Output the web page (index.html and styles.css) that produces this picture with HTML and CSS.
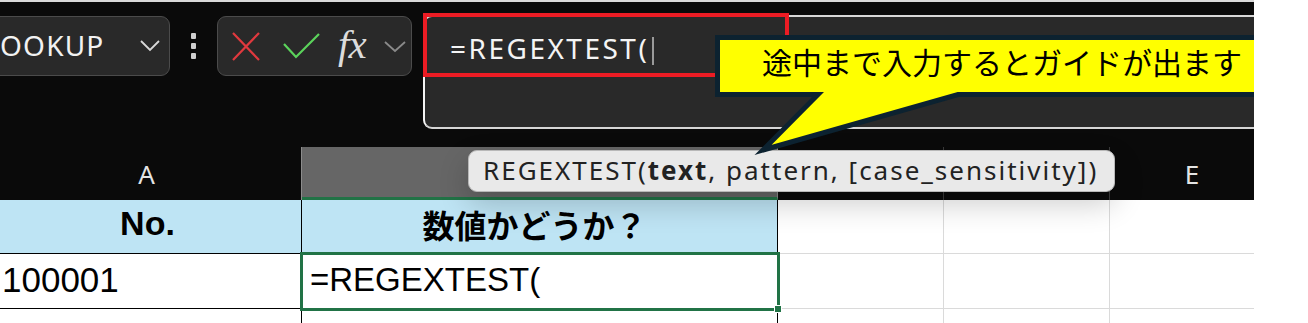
FILE: index.html
```html
<!DOCTYPE html>
<html lang="ja">
<head>
<meta charset="utf-8">
<title>REGEXTEST</title>
<link rel="stylesheet" href="styles.css">
</head>
<body>
<div class="app">
  <div class="toolbar">
    <div class="namebox">
      <span class="nb-text">OOKUP</span>
      <svg class="nb-chev" width="20" height="12" viewBox="0 0 20 12"><polyline points="1,1 10,10 19,1" fill="none" stroke="#d8d8d8" stroke-width="1.8"/></svg>
    </div>
    <div class="dots"><i></i><i></i><i></i></div>
    <div class="fxbox">
      <svg class="ic-x" width="28" height="29" viewBox="0 0 28 29"><path d="M1 1 L27 28 M27 1 L1 28" stroke="#e0393e" stroke-width="2.2" fill="none"/></svg>
      <svg class="ic-check" width="37" height="26" viewBox="0 0 37 26"><polyline points="1,11 13,24 36,1" fill="none" stroke="#5bd35b" stroke-width="2.2"/></svg>
      <span class="fx">fx</span>
      <svg class="fx-chev" width="22" height="12" viewBox="0 0 22 12"><polyline points="1,1 11,10 21,1" fill="none" stroke="#8a8a8a" stroke-width="1.8"/></svg>
    </div>
    <div class="formulabar">
      <span class="ftext">=REGEXTEST(</span><span class="caret"></span>
    </div>
  </div>

  <div class="grid">
    <div class="hd hd-a">A</div>
    <div class="hd hd-b"></div>
    <div class="hd hd-c"></div>
    <div class="hd hd-d"></div>
    <div class="hd hd-e">E</div>

    <div class="cell c-a blue bold center">No.</div>
    <div class="cell c-b blue bold center">数値かどうか？</div>
    <div class="cell c-g"></div>
    <div class="cell c-g"></div>
    <div class="cell c-g"></div>

    <div class="cell c-a num">100001</div>
    <div class="cell c-b active">=REGEXTEST(<span class="handle"></span></div>
    <div class="cell c-g"></div>
    <div class="cell c-g"></div>
    <div class="cell c-g"></div>

    <div class="cell c-a last"></div>
    <div class="cell c-b last"></div>
    <div class="cell c-g last"></div>
    <div class="cell c-g last"></div>
    <div class="cell c-g last"></div>
  </div>

  <div class="redmark"></div>

  <div class="tooltip">REGEXTEST(<b>text</b>, pattern, [case_sensitivity])</div>

  <div class="callout">
    <svg class="callout-shape" width="592" height="122" viewBox="713 33 592 122">
      <polygon points="717.5,37.5 1297.5,37.5 1297.5,94.5 958,94.5 763,150 818,94.5 717.5,94.5" fill="#ffff00" stroke="#0c2230" stroke-width="5" stroke-linejoin="miter"/>
    </svg>
    <div class="callout-text">途中まで入力するとガイドが出ます</div>
  </div>
</div>
</body>
</html>
```
FILE: styles.css
```css
* { box-sizing: border-box; }
html, body { margin: 0; padding: 0; background: #ffffff; }
body { width: 1308px; height: 323px; overflow: hidden; }

.app {
  position: relative;
  width: 1254px;
  height: 323px;
  overflow: hidden;
  background: #ffffff;
  font-family: "Noto Sans", "Noto Sans CJK JP", sans-serif;
}

/* ---------- toolbar ---------- */
.toolbar {
  height: 147px;
  background: #0a0a0a;
  border-top: 2px solid #d9d9d9;
  display: flex;
  align-items: flex-start;
  padding-top: 14px;
}

.namebox {
  width: 190px;
  height: 60px;
  margin-left: -20px;
  background: #292929;
  border: 1px solid #4b4b4b;
  border-radius: 9px;
  display: flex;
  align-items: center;
  justify-content: space-between;
  padding: 0 9px 0 19px;
  color: #f2f2f2;
  font-size: 28px;
  letter-spacing: 1.2px;
}
.nb-text { line-height: 1; margin-top: -2px; }

.dots {
  display: flex;
  flex-direction: column;
  gap: 4px;
  margin: 17px 0 0 21px;
}
.dots i {
  display: block;
  width: 5px;
  height: 6px;
  border-radius: 1px;
  background: #cfcfcf;
}

.fxbox {
  width: 195px;
  height: 60px;
  margin-left: 21px;
  background: #292929;
  border: 1px solid #4b4b4b;
  border-radius: 9px;
  display: flex;
  align-items: center;
  padding-left: 14px;
}
.ic-x { margin-top: 1px; }
.ic-check { margin-left: 23px; margin-top: -1px; }
.fx {
  margin-left: 18px;
  font-family: "Liberation Serif", "DejaVu Serif", serif;
  font-style: italic;
  font-size: 41px;
  color: #dcdcdc;
  line-height: 1;
  margin-top: -4px;
  width: 36px;
  letter-spacing: -1px;
}
.fx-chev { margin-left: 10px; margin-top: 2px; }

.formulabar {
  flex: 1;
  height: 114px;
  margin: -1px -20px 0 11px;
  background: #292929;
  border: 2px solid #d6d6d6;
  border-left-color: #f4f4f4;
  border-radius: 9px;
  padding: 15px 0 0 25px;
  display: flex;
  align-items: flex-start;
}
.ftext {
  color: #f4f4f4;
  font-size: 28px;
  line-height: 1.2;
  letter-spacing: 2.5px;
}
.caret {
  width: 2px;
  height: 28px;
  margin-top: 5px;
  margin-left: 3px;
  background: #9a9a9a;
}

/* ---------- grid ---------- */
.grid {
  display: grid;
  grid-template-columns: 302px 476px 166px 166px 164px;
  grid-template-rows: 53px 54px 55px 30px;
  font-family: "Liberation Sans", "Noto Sans CJK JP", sans-serif;
}

.hd {
  background: #0a0a0a;
  color: #e4e4e4;
  font-family: "Noto Sans", sans-serif;
  font-size: 26px;
  display: flex;
  align-items: center;
  justify-content: center;
  border-right: 1px solid #3a3a3a;
}
.hd-a { border-right-color: #8c8c8c; padding-right: 8px; }
.hd-b { background: #666666; border-bottom: 3px solid #217346; border-right-color: #8c8c8c; }
.hd-e { padding-right: 0; border-right: none; }

.cell {
  color: #000;
  font-size: 32px;
  display: flex;
  align-items: center;
  border-right: 1px solid #dadada;
  border-bottom: 1px solid #dadada;
}
.c-a, .c-b { border-right-color: #000; border-bottom-color: #000; }
.c-a.last, .c-b.last, .c-g.last { border-bottom: none; }
.c-a.last { border-right-color: #000; }

.blue { background: #bee4f4; }
.bold { font-weight: 700; }
.center { justify-content: center; padding-bottom: 6px; }
.c-a.center { padding-left: 0; padding-right: 6px; font-size: 34px; }
.c-b.center { font-family: "Noto Sans CJK JP", sans-serif; font-size: 32px; padding-right: 10px; }

.num { padding-left: 2px; font-size: 35px; padding-bottom: 2px; }

.active {
  position: relative;
  z-index: 1;
  padding-left: 8px;
  padding-bottom: 2px;
  font-size: 33px;
  outline: 3px solid #217346;
  outline-offset: -1px;
}
.handle {
  position: absolute;
  right: -5px;
  bottom: -5px;
  width: 8px;
  height: 8px;
  background: #217346;
  border: 1px solid #ffffff;
}

/* ---------- overlays ---------- */
.redmark {
  position: absolute;
  left: 423px;
  top: 13px;
  width: 366px;
  height: 64px;
  border: 4px solid #ec1c24;
  z-index: 2;
}

.tooltip {
  position: absolute;
  left: 468px;
  top: 150px;
  width: 647px;
  height: 42px;
  background: #e9e9e9;
  border: 1px solid #b8b8b8;
  border-radius: 9px;
  box-shadow: 0 12px 30px rgba(0, 0, 0, 0.2);
  color: #222222;
  font-family: "Noto Sans", sans-serif;
  font-size: 26px;
  letter-spacing: 2px;
  line-height: 38px;
  padding-left: 14px;
  white-space: nowrap;
  z-index: 3;
}
.tooltip b { font-weight: 700; }

.callout {
  position: absolute;
  left: 713px;
  top: 33px;
  width: 592px;
  height: 122px;
  z-index: 4;
}
.callout-shape {
  position: absolute;
  left: 0;
  top: 0;
}
.callout-text {
  position: relative;
  padding: 8px 0 0 49px;
  font-family: "Noto Sans CJK JP", sans-serif;
  font-size: 30px;
  line-height: 40px;
  color: #000;
  white-space: nowrap;
}
```
